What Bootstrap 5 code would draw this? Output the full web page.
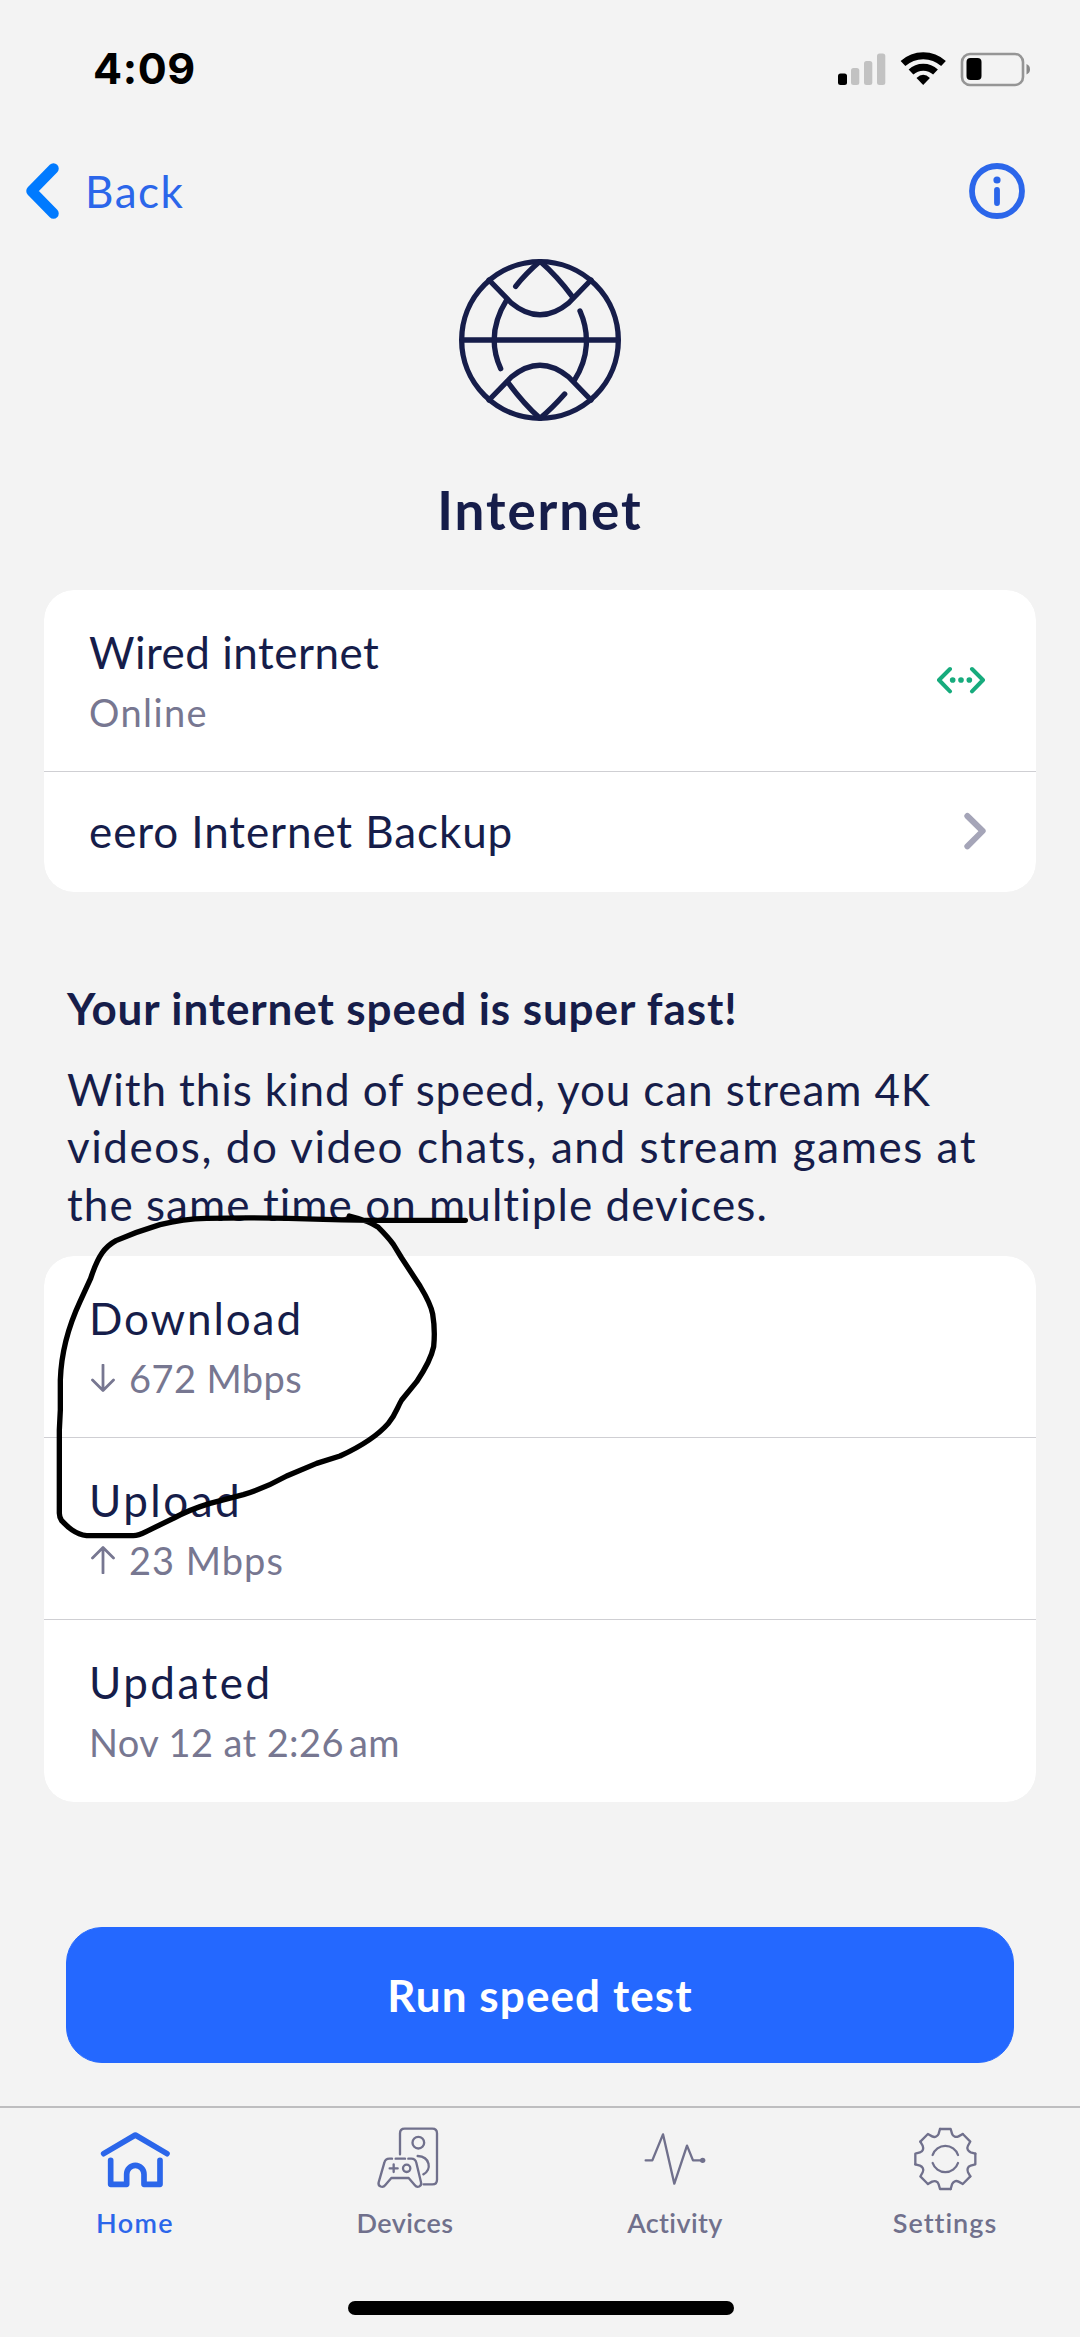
<!DOCTYPE html>
<html lang="en">
<head>
<meta charset="utf-8">
<meta name="viewport" content="width=device-width, initial-scale=1">
<title>Internet</title>
<link href="https://cdn.jsdelivr.net/npm/bootstrap@5.3.0/dist/css/bootstrap.min.css" rel="stylesheet">
<style>
  body { --tighten: -.5px; background: #f3f3f3; color: #161d4a; font-family: Lato, sans-serif; font-size: 44px; line-height: 57px; }
  svg { display: block; flex: none; fill: none; stroke-linecap: round; stroke-linejoin: round; }
  .screen { width: 1080px; height: 2337px; overflow: hidden; }
  .status-bar { height: 137px; padding: 0 50px 0 93px; }
  .clock { font: 700 43px/57px Inter, sans-serif; color: #000; letter-spacing: .6px; }
  .top-bar { height: 108px; padding: 0 55px 0 26px; }
  .back-link { color: #2b66ea; gap: 25px; }
  .hero { padding-top: 14px; height: 345px; }
  .hero h1 { font-size: 53px; line-height: 64px; font-weight: 700; margin: 57px 0 0; letter-spacing: 1.9px; }
  .panel { margin: 0 44px; border-radius: 30px; overflow: hidden; --bs-list-group-border-color: #cfcfd3; }
  .panel .list-group-item { color: inherit; padding: 34px 50px 0 45px; height: 182px; border-width: 0 0 1px; }
  .panel .list-group-item:last-child { border-bottom: 0; }
  .panel .single { height: 120px; padding: 0 50px 2px 45px; }
  .wired-icon { margin-top: 42px; }
  .sub { --tighten: 0px; color: #777791; font-size: 38px; line-height: 62px; }
  .speed { gap: 14px; padding-left: 2px; }
  .summary { padding: 88px 67px 0; height: 364px; }
  .summary h2 { font-size: 44px; line-height: 57px; font-weight: 700; margin: 0 0 24px; }
  .summary p { line-height: 57.3px; margin: 0; white-space: nowrap; }
  .run-wrap { padding: 125px 66px 43px; }
  .run-btn { --bs-btn-bg: #2468ff; --bs-btn-border-color: #2468ff; height: 136px; border-radius: 36px; font-size: 44px; font-weight: 700; line-height: 57px; letter-spacing: 1.1px; }
  .tabs { border-top: 2px solid #bdbdbf; height: 231px; padding-top: 17px; }
  .tab-item { --tighten: 0px; color: #70708c; font-size: 27px; line-height: 36px; font-weight: 600; gap: 10px; }
  .tab-item.active { color: #2b66ea; }
  .home-indicator { width: 386px; height: 14px; background: #000; left: 348px; top: 2301px; }
  .scribble { left: 30px; top: 1190px; }
  /* tracking steps */
  .tr-0 { letter-spacing: calc(.4px + var(--tighten)); }
  .tr-1 { letter-spacing: calc(1px + var(--tighten)); }
  .tr-2 { letter-spacing: calc(1.4px + var(--tighten)); }
  .tr-3 { letter-spacing: calc(1.55px + var(--tighten)); }
  .tr-4 { letter-spacing: calc(2.05px + var(--tighten)); }
  .tr-5 { letter-spacing: calc(2.4px + var(--tighten)); }
  .tr-6 { letter-spacing: calc(3px + var(--tighten)); }
</style>
<script src="https://cdn.jsdelivr.net/npm/bootstrap@5.3.0/dist/js/bootstrap.bundle.min.js"></script>
</head>
<body>
<div class="screen position-relative">
  <header class="status-bar d-flex align-items-center justify-content-between">
    <span class="clock">4:09</span>
    <svg width="194" height="36" viewBox="835 50 194 36">
      <rect x="837" y="72.5" width="9" height="11.5" rx="2.5" fill="#000"/>
      <g fill="#c2c2c2"><rect x="850" y="67" width="8.3" height="17" rx="2.5"/><rect x="863" y="60" width="8.3" height="24" rx="2.5"/><rect x="876" y="52.5" width="8.3" height="31.5" rx="2.5"/></g>
      <g stroke="#000" stroke-width="7" stroke-linecap="butt"><path d="M902 62.500a30 30 0 0 1 40.500 0"/><path d="M910 71a18 18 0 0 1 24.500 0"/></g>
      <path d="M915.500 77q6.700-6.500 13.400 0l-6.700 7z" fill="#000"/>
      <rect x="961" y="53" width="61" height="31" rx="8" stroke="#959595" stroke-width="2.6"/>
      <rect x="965.5" y="57" width="15" height="22" rx="4" fill="#000"/>
      <path d="M1025.500 63q3.500 1.500 3.500 5.200t-3.500 5.200z" fill="#888"/>
    </svg>
  </header>

  <nav class="top-bar d-flex align-items-center justify-content-between">
    <a class="back-link d-flex align-items-center text-decoration-none" href="#">
      <svg width="34" height="58" viewBox="26 162 34 58" stroke="#007aff" stroke-width="10.5"><path d="M53.500 168.500 31.500 191l22 22.500"/></svg>
      <span class="tr-4">Back</span>
    </a>
    <svg width="56" height="56" viewBox="0 0 56 56" stroke="#2b66ea" stroke-width="5.8"><circle cx="28" cy="28" r="25"/><path d="M28 27v13"/><circle cx="28" cy="17" r="3.6" fill="#2b66ea" stroke="none"/></svg>
  </nav>

  <section class="hero d-flex flex-column align-items-center">
    <svg width="162" height="162" viewBox="178 87 486 486" stroke="#161d4a" stroke-width="16">
      <circle cx="421" cy="330" r="235"/>
      <path d="M190 330H652M268 150l67 69q86 71 172 0l67-69M268 510l67-69q86-71 172 0l67 69"/>
      <path d="M348 169q30-38 73-75q52 45 97 106M322 208c-44 70-49 142-19 208M541 243c29 66 27 140-17 208M324 456q47 64 97 109q36-30 74-73"/>
    </svg>
    <h1>Internet</h1>
  </section>

  <main>
    <div class="panel list-group list-group-flush">
      <div class="list-group-item d-flex justify-content-between">
        <div>
          <div class="tr-1">Wired internet</div>
          <div class="sub tr-2">Online</div>
        </div>
        <svg class="wired-icon" width="50" height="28" viewBox="168 288 150 84" stroke="#17ab7d" stroke-width="12"><path d="M210 297l-33 33 33 34M276 297l33 33-33 34"/><g fill="#17ab7d" stroke="none"><circle cx="218" cy="330" r="8.5"/><circle cx="243" cy="330" r="8.5"/><circle cx="268" cy="330" r="8.5"/></g></svg>
      </div>
      <a class="single list-group-item d-flex align-items-center justify-content-between" href="#">
        <span class="tr-2">eero Internet Backup</span>
        <svg width="22" height="38" viewBox="251 726 66 114" stroke="#a5a5b8" stroke-width="18"><path d="M261 738l46 45-46 46"/></svg>
      </a>
    </div>

    <section class="summary">
      <h2 class="tr-2">Your internet speed is super fast!</h2>
      <p><span class="tr-2">With this kind of speed, you can stream 4K</span><br><span class="tr-4">videos, do video chats, and stream games at</span><br><span class="tr-3">the same time on multiple devices.</span></p>
    </section>

    <div class="panel list-group list-group-flush">
      <div class="list-group-item">
        <div class="tr-5">Download</div>
        <div class="sub speed d-flex align-items-center">
          <svg width="24" height="28" viewBox="0 0 24 28" stroke="#777791" stroke-width="2.8"><path d="M12 1v25M1.500 16 12 26.500 22.500 16"/></svg>
          <span class="tr-0">672 Mbps</span>
        </div>
      </div>
      <div class="list-group-item">
        <div class="tr-6">Upload</div>
        <div class="sub speed d-flex align-items-center">
          <svg width="24" height="28" viewBox="0 0 24 28" stroke="#777791" stroke-width="2.8"><path d="M12 27V2M1.500 12 12 1.500 22.500 12"/></svg>
          <span class="tr-1">23 Mbps</span>
        </div>
      </div>
      <div class="list-group-item">
        <div class="tr-6">Updated</div>
        <div class="sub tr-0">Nov 12 at 2:26&#8201;am</div>
      </div>
    </div>

    <div class="run-wrap">
      <button class="run-btn btn btn-primary w-100" type="button">Run speed test</button>
    </div>
  </main>

  <nav class="tabs row g-0 text-center align-items-start">
    <a class="tab-item active col d-flex flex-column align-items-center text-decoration-none" href="#">
      <svg width="70" height="70" viewBox="120 102 210 210" stroke="currentColor" stroke-width="17"><path d="M131 188l95-56 95 56M152 208v72h48v-30a26 27 0 0 1 52 0v30h48v-72"/></svg>
      <span class="tr-2">Home</span>
    </a>
    <a class="tab-item col d-flex flex-column align-items-center text-decoration-none" href="#">
      <svg width="70" height="70" viewBox="930 102 210 210" stroke="currentColor" stroke-width="7"><path d="M1020 190v-63q0-14 14-14h83q14 0 14 14v139q0 14-14 14h-26M1073 195c38 2 43 42 17 55M1007 203h28M996 203h-8q-12 0-15 12l-17 59c-3 12 12 19 20 8l18-21h52l18 21c8 11 22 4 19-8l-14-59q-3-12-15-12h-9M1001 220v23M989 232h24"/><circle cx="1075" cy="155" r="17.5"/><circle cx="1040" cy="232" r="11"/></svg>
      <span class="tr-0">Devices</span>
    </a>
    <a class="tab-item col d-flex flex-column align-items-center text-decoration-none" href="#">
      <svg width="70" height="70" viewBox="180 102 210 210" stroke="currentColor" stroke-width="7"><path d="M197 208h20l32-78 34 148 38-114 18 44h30"/><circle cx="368" cy="208" r="8" fill="currentColor" stroke="none"/></svg>
      <span class="tr-0">Activity</span>
    </a>
    <a class="tab-item col d-flex flex-column align-items-center text-decoration-none" href="#">
      <svg width="70" height="70" viewBox="-106 -102 210 210" stroke="currentColor" stroke-width="7">
        <defs><path id="tooth" d="M-16-90H16L20-76C23-66 32-65 39.600-67.900L52.300-75"/></defs>
        <use href="#tooth"/><use href="#tooth" transform="rotate(45)"/><use href="#tooth" transform="rotate(90)"/><use href="#tooth" transform="rotate(135)"/><use href="#tooth" transform="rotate(180)"/><use href="#tooth" transform="rotate(225)"/><use href="#tooth" transform="rotate(270)"/><use href="#tooth" transform="rotate(315)"/>
        <path d="M-38-12a40 40 0 0 1 76 0M-38 12a40 40 0 0 0 76 0"/>
      </svg>
      <span class="tr-1">Settings</span>
    </a>
  </nav>

  <div class="home-indicator position-absolute rounded-pill"></div>

  <!-- Hand-drawn loop around the download figures -->
  <svg class="scribble position-absolute" width="440" height="380" viewBox="0 0 1320 1140" stroke="#000" stroke-width="16">
    <path d="M958 78Q1015 92 1045 112Q1075 142 1090 163L1115 204L1170 288Q1203 343 1208 372Q1216 420 1211 470Q1202 513 1160 575L1115 630C1100 655 1100 670 1075 700Q1030 752 930 798L860 820L770 858Q710 892 640 914L540 940Q480 958 430 985L350 1024Q325 1037 310 1037H170C135 1033 112 1010 95 992Q88 982 88 970V720L91 660V570C94 480 122 395 150 335L182 265C205 195 225 170 258 152Q320 125 390 104Q460 86 530 85Q700 81 880 88Q1000 91 1060 91H1306"/>
  </svg>
</div>
</body>
</html>
